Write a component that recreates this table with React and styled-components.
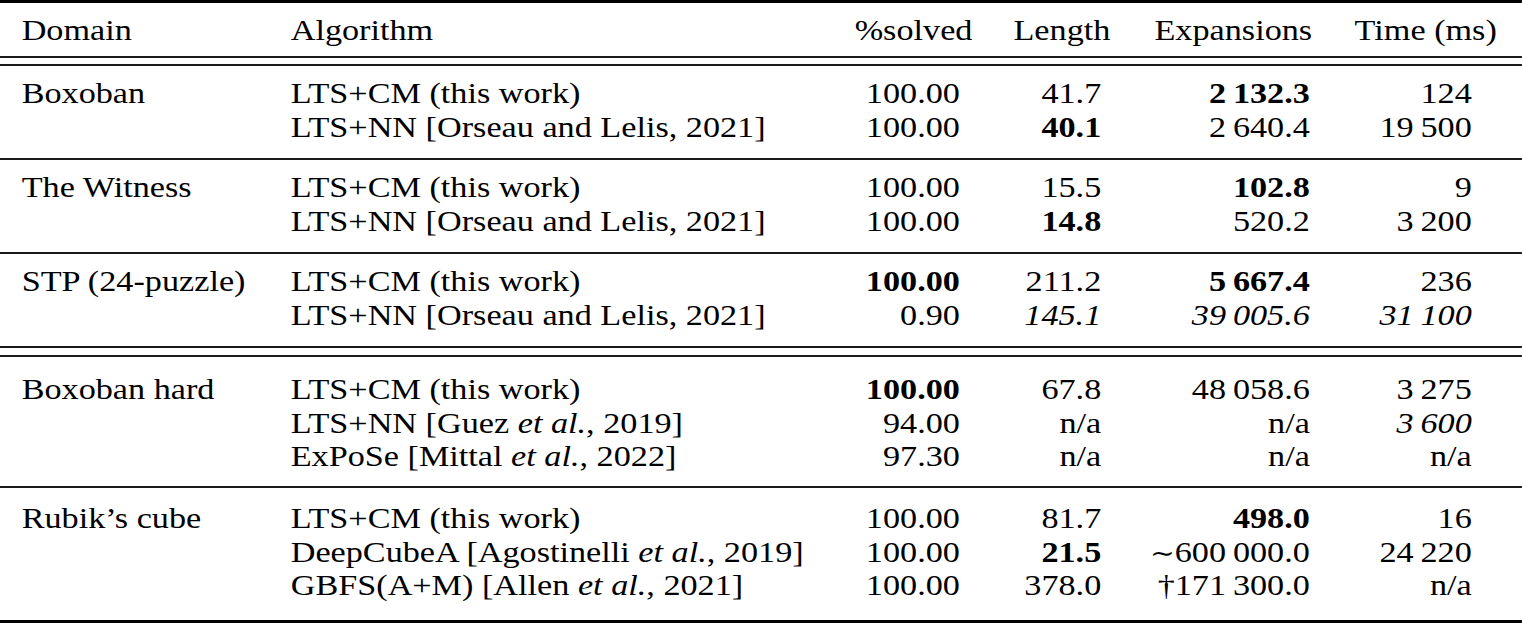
import React from 'react'
import styled, { createGlobalStyle, css } from 'styled-components'

const GlobalStyle = createGlobalStyle`
  html, body {
    margin: 0;
    padding: 0;
    background: #fff;
  }
  body {
    font-family: "Liberation Serif", Tinos, "Times New Roman", Times, serif;
    color: #000;
  }
`

// column widths in unscaled table units (table is stretched horizontally)
const COLS = '236px 504px 125px 120px 177px 173px'
// right padding per numeric column: [header, body]
const NUM_PAD = [
  [12, 23],
  [11, 19],
  [11, 13],
  [22, 44],
]

const Page = styled.div`
  width: 1522px;
  height: 624px;
  overflow: hidden;
  background: #fff;
`

const Table = styled.div`
  width: 1335px;
  transform: scaleX(1.14);
  transform-origin: 0 0;
  font-size: 30px;
  border-top: 3px solid #000;
  border-bottom: 3px solid #000;
`

const Head = styled.div`
  padding: 10px 0 9.5px;
`

const DoubleRule = styled.div`
  height: ${p => p.$gap}px;
  border-top: 2px solid #1a1a1a;
  border-bottom: 2px solid #1a1a1a;
`

const Group = styled.div`
  padding: ${p => p.$pad[0]}px 0 ${p => p.$pad[1]}px;
  ${p => p.$rule === 'single' && css`border-bottom: 2px solid #1a1a1a;`}
`

const Row = styled.div`
  display: grid;
  grid-template-columns: ${COLS};
  height: 33.5px;
  line-height: 33.5px;
  white-space: nowrap;
`

const TextCell = styled.div`
  padding-left: 19px;
`

const NumCell = styled.div`
  text-align: right;
  padding-right: ${p => NUM_PAD[p.$col][p.$head ? 0 : 1]}px;
`

const Bold = styled.b`
  font-weight: 700;
`

const Em = styled.i`
  font-style: italic;
`

const Sym = styled.span`
  font-family: "DejaVu Serif", serif;
  font-size: 26px;
`

const T = '\u2009'

const etal = (name, year) => (
  <>
    {name} <Em>et al.</Em>, {year}]
  </>
)

const groups = [
  {
    domain: 'Boxoban',
    rule: 'single',
    pad: [10, 15],
    rows: [
      ['LTS+CM (this work)', '100.00', '41.7', <Bold>2{T}132.3</Bold>, '124'],
      ['LTS+NN [Orseau and Lelis, 2021]', '100.00', <Bold>40.1</Bold>, `2${T}640.4`, `19${T}500`],
    ],
  },
  {
    domain: 'The Witness',
    rule: 'single',
    pad: [10, 15],
    rows: [
      ['LTS+CM (this work)', '100.00', '15.5', <Bold>102.8</Bold>, '9'],
      ['LTS+NN [Orseau and Lelis, 2021]', '100.00', <Bold>14.8</Bold>, '520.2', `3${T}200`],
    ],
  },
  {
    domain: 'STP (24-puzzle)',
    rule: 'double',
    pad: [10, 15],
    rows: [
      ['LTS+CM (this work)', <Bold>100.00</Bold>, '211.2', <Bold>5{T}667.4</Bold>, '236'],
      ['LTS+NN [Orseau and Lelis, 2021]', '0.90', <Em>145.1</Em>, <Em>39{T}005.6</Em>, <Em>31{T}100</Em>],
    ],
  },
  {
    domain: 'Boxoban hard',
    rule: 'single',
    pad: [15, 13.5],
    rows: [
      ['LTS+CM (this work)', <Bold>100.00</Bold>, '67.8', `48${T}058.6`, `3${T}275`],
      [etal('LTS+NN [Guez', '2019'), '94.00', 'n/a', 'n/a', <Em>3{T}600</Em>],
      [etal('ExPoSe [Mittal', '2022'), '97.30', 'n/a', 'n/a', 'n/a'],
    ],
  },
  {
    domain: 'Rubik’s cube',
    rule: 'none',
    pad: [13, 18.5],
    rows: [
      ['LTS+CM (this work)', '100.00', '81.7', <Bold>498.0</Bold>, '16'],
      [etal('DeepCubeA [Agostinelli', '2019'), '100.00', <Bold>21.5</Bold>, <><Sym>∼</Sym>600{T}000.0</>, `24${T}220`],
      [etal('GBFS(A+M) [Allen', '2021'), '100.00', '378.0', `†171${T}300.0`, 'n/a'],
    ],
  },
]

const headers = ['%solved', 'Length', 'Expansions', 'Time (ms)']

const App = () => (
  <Page>
    <GlobalStyle />
    <Table>
      <Head>
        <Row>
          <TextCell>Domain</TextCell>
          <TextCell>Algorithm</TextCell>
          {headers.map((h, i) => (
            <NumCell key={h} $col={i} $head>{h}</NumCell>
          ))}
        </Row>
      </Head>
      <DoubleRule $gap={6} />
      {groups.map(g => (
        <React.Fragment key={g.domain}>
          <Group $rule={g.rule} $pad={g.pad}>
            {g.rows.map((r, ri) => (
              <Row key={ri}>
                <TextCell>{ri === 0 ? g.domain : ''}</TextCell>
                <TextCell>{r[0]}</TextCell>
                {r.slice(1).map((v, ci) => (
                  <NumCell key={ci} $col={ci}>{v}</NumCell>
                ))}
              </Row>
            ))}
          </Group>
          {g.rule === 'double' && <DoubleRule $gap={7} />}
        </React.Fragment>
      ))}
    </Table>
  </Page>
)

export default App
